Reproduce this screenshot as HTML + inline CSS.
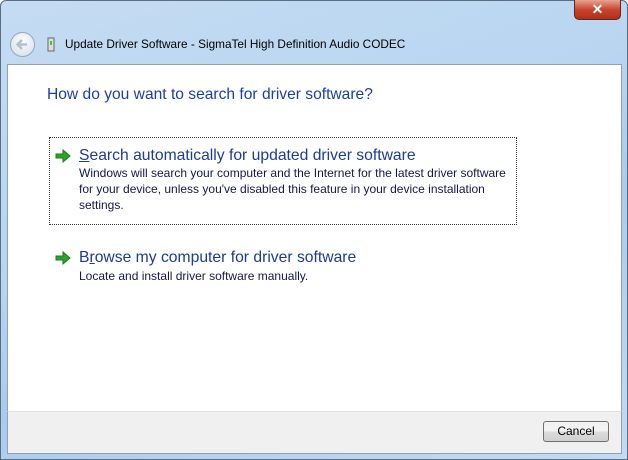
<!DOCTYPE html>
<html><head><style>
body{margin:0;width:628px;height:460px;overflow:hidden;font-family:"Liberation Sans",sans-serif;}
.frame{position:absolute;left:0;top:0;width:628px;height:460px;background:linear-gradient(160deg,#c4dcf3 0%,#b9d5f0 40%,#a9cbec 60%,#c3dbf3 100%);border-radius:6px 6px 0 0;box-shadow:inset 0 0 0 1px #5a6d83;}
.content{position:absolute;left:7px;top:64px;width:613px;height:347px;background:#fff;border:1px solid #8da2b8;border-bottom:none;}
.footer{position:absolute;left:7px;top:411px;width:613px;height:41px;background:#f0f0f0;border:1px solid #8da2b8;border-top:1px solid #dfdfdf;}
.close{position:absolute;left:574px;top:0;width:45px;height:19px;background:linear-gradient(#e8a493,#c7452f 50%,#b12e17);border:1px solid #5c2b20;border-top:none;border-radius:0 0 5px 5px;color:#fff;font-weight:bold;font-size:14px;text-align:center;line-height:18px;}
.back{position:absolute;left:10px;top:32px;width:23px;height:23px;border-radius:50%;background:radial-gradient(circle at 50% 35%,#fbfdff,#d5dde7);border:1px solid #98a7b8;}
.title{position:absolute;left:65px;top:37px;font-size:11.8px;color:#000;}
.h{position:absolute;left:47px;top:86px;font-size:15.6px;color:#1a3da8;}
.box{position:absolute;left:49px;top:137px;width:466px;height:86px;border:1px dotted #333;}
.arrow{position:absolute;width:16px;height:14px;}
.ot{position:absolute;left:79px;font-size:15.7px;color:#1c3b92;}
.od{position:absolute;left:79px;font-size:12px;color:#13164e;line-height:16px;width:432px;}
.btn{position:absolute;left:543px;top:421px;width:64px;height:19px;border:1px solid #707070;border-radius:3px;background:linear-gradient(#f2f2f2 50%,#dcdcdc 50%,#d0d0d0);font-size:12px;text-align:center;line-height:19px;}
</style></head><body>
<div class="frame"></div>
<div class="close">✕</div>
<div class="back"><svg width="23" height="23"><path d="M16 11.5H7M11 7l-4.5 4.5L11 16" stroke="#b5c0cc" stroke-width="2.5" fill="none"/></svg></div>
<svg style="position:absolute;left:47px;top:37px" width="8" height="16"><rect x="1" y="1" width="6" height="13" fill="#ddd" stroke="#666"/><rect x="3" y="4" width="2" height="4" fill="#3c3"/></svg>
<div class="title">Update Driver Software - SigmaTel High Definition Audio CODEC</div>
<div class="content"></div>
<div class="footer"></div>
<div class="h">How do you want to search for driver software?</div>
<div class="box"></div>
<svg class="arrow" style="left:55px;top:149px" viewBox="0 0 16 14"><path d="M1 5h7V1l7 6-7 6V9H1z" fill="#2aa52a" stroke="#1a7a1a"/></svg>
<div class="ot" style="top:147px"><u>S</u>earch automatically for updated driver software</div>
<div class="od" style="top:165px">Windows will search your computer and the Internet for the latest driver software for your device, unless you've disabled this feature in your device installation settings.</div>
<svg class="arrow" style="left:55px;top:251px" viewBox="0 0 16 14"><path d="M1 5h7V1l7 6-7 6V9H1z" fill="#2aa52a" stroke="#1a7a1a"/></svg>
<div class="ot" style="top:249px">B<u>r</u>owse my computer for driver software</div>
<div class="od" style="top:268px">Locate and install driver software manually.</div>
<div class="btn">Cancel</div>
</body></html>
